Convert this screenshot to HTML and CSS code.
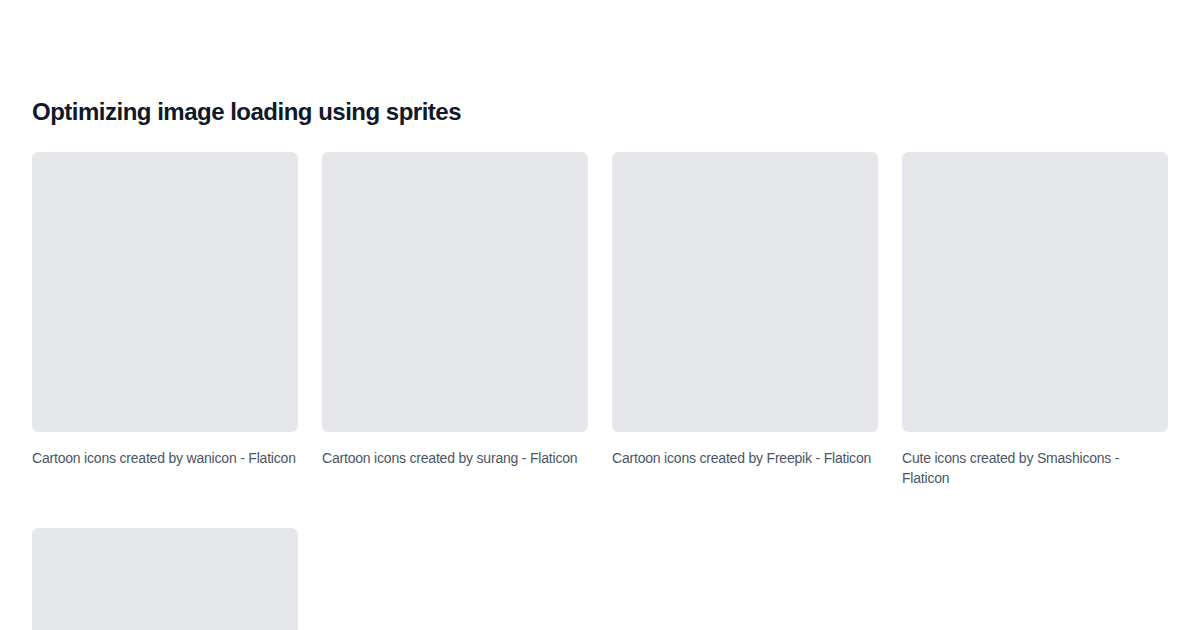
FILE: index.html
```html
<!DOCTYPE html>
<html lang="en">
<head>
    <meta charset="UTF-8">
    <meta name="viewport" content="width=device-width, initial-scale=1.0">
    <title>Optimizing image loading using sprites</title>
    <link rel="stylesheet" href="styles.css">
</head>
<body>
    <main class="page">
        <h1 class="page-title">Optimizing image loading using sprites</h1>

        <div class="sprite-grid">
            <figure class="sprite-card">
                <div class="sprite-image"></div>
                <figcaption class="sprite-credit">Cartoon icons created by wanicon - Flaticon</figcaption>
            </figure>
            <figure class="sprite-card">
                <div class="sprite-image"></div>
                <figcaption class="sprite-credit">Cartoon icons created by surang - Flaticon</figcaption>
            </figure>
            <figure class="sprite-card">
                <div class="sprite-image"></div>
                <figcaption class="sprite-credit">Cartoon icons created by Freepik - Flaticon</figcaption>
            </figure>
            <figure class="sprite-card">
                <div class="sprite-image"></div>
                <figcaption class="sprite-credit">Cute icons created by Smashicons - Flaticon</figcaption>
            </figure>
            <figure class="sprite-card">
                <div class="sprite-image"></div>
                <figcaption class="sprite-credit">Cartoon icons created by Freepik - Flaticon</figcaption>
            </figure>
        </div>
    </main>
</body>
</html>
```

FILE: styles.css
```css
* {
    margin: 0;
    padding: 0;
    box-sizing: border-box;
}

body {
    font-family: 'Liberation Sans', Arial, sans-serif;
    background: #ffffff;
    color: #111827;
}

.page {
    padding: 96px 32px 32px;
}

.page-title {
    font-size: 24px;
    line-height: 32px;
    font-weight: bold;
    letter-spacing: -0.5px;
    color: #111827;
    margin-bottom: 24px;
}

.sprite-grid {
    display: grid;
    grid-template-columns: repeat(4, 1fr);
    column-gap: 24px;
    row-gap: 40px;
}

.sprite-image {
    height: 280px;
    background: #e5e7eb;
    border-radius: 6px;
}

.sprite-credit {
    margin-top: 16px;
    font-size: 14px;
    line-height: 20px;
    letter-spacing: -0.2px;
    color: #4b5563;
}
```
